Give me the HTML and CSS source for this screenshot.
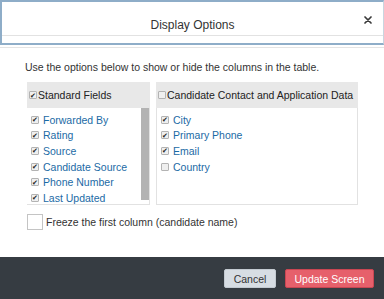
FILE: index.html
```html
<!DOCTYPE html>
<html lang="en">
<head>
  <meta charset="UTF-8">
  <meta name="viewport" content="width=device-width, initial-scale=1.0">
  <title>Display Options</title>
  <link rel="stylesheet" href="styles.css">
</head>
<body>
  <div class="modal">
    <div class="modal-top">
      <div class="modal-header">
        <h2>Display Options</h2>
        <svg class="close" width="8" height="8" viewBox="0 0 8 8">
          <path d="M1 1L7 7M7 1L1 7" stroke="#3a3a3a" stroke-width="1.7" stroke-linecap="round"/>
        </svg>
      </div>
    </div>

    <div class="modal-body">
      <p class="intro">Use the options below to show or hide the columns in the table.</p>

      <div class="field-groups">
        <div class="group group-standard">
          <div class="group-head"><span class="cb on"></span>Standard Fields</div>
          <div class="group-list">
            <ul>
              <li><span class="cb on"></span>Forwarded By</li>
              <li><span class="cb on"></span>Rating</li>
              <li><span class="cb on"></span>Source</li>
              <li><span class="cb on"></span>Candidate Source</li>
              <li><span class="cb on"></span>Phone Number</li>
              <li><span class="cb on"></span>Last Updated</li>
            </ul>
            <div class="scrollbar"></div>
          </div>
        </div>

        <div class="group group-contact">
          <div class="group-head"><span class="cb"></span>Candidate Contact and Application Data</div>
          <div class="group-list">
            <ul>
              <li><span class="cb on"></span>City</li>
              <li><span class="cb on"></span>Primary Phone</li>
              <li><span class="cb on"></span>Email</li>
              <li><span class="cb"></span>Country</li>
            </ul>
          </div>
        </div>
      </div>

      <label class="freeze"><span class="box"></span>Freeze the first column (candidate name)</label>
    </div>

    <div class="modal-footer">
      <button class="btn btn-cancel">Cancel</button>
      <button class="btn btn-update">Update Screen</button>
    </div>
  </div>
</body>
</html>
```

FILE: styles.css
```css
body {
  margin: 0;
  font-family: 'Liberation Sans', Arial, sans-serif;
  font-size: 10.5px;
  color: #333;
  background: #fff;
}
.modal {
  width: 384px;
  height: 299px;
  display: flex;
  flex-direction: column;
  overflow: hidden;
}
.modal-top {
  border: 2px solid #8eadc8;
  border-right: 1px solid #c9d6e0;
  height: 41px;
  background: #fff;
}
.modal-header {
  position: relative;
  height: 33px;
  border-bottom: 1px solid #e2e2e2;
  display: flex;
  align-items: center;
  justify-content: center;
}
.modal-header h2 {
  margin: 12px 0 0;
  font-size: 12px;
  font-weight: normal;
  color: #333;
}
.close {
  position: absolute;
  right: 11px;
  top: 14px;
}
.modal-body {
  flex: 1;
  border-top: 1px solid #e4e4e4;
  margin-top: 2px;
  padding: 0 26px 0 27px;
}
.intro {
  margin: 13px 0 0 -2px;
}
.field-groups {
  display: flex;
  gap: 6px;
  margin-top: 9px;
}
.group-head {
  height: 26px;
  background: #e8e8e8;
  display: flex;
  align-items: center;
  color: #222;
  white-space: nowrap;
}
.group-head .cb {
  margin: 0 1px 0 2px;
}
.group-standard {
  width: 123px;
}
.group-contact {
  flex: 1;
}
.group-list {
  display: flex;
  height: 96px;
  border: 1px solid #e2e2e2;
  border-top: none;
  overflow: hidden;
}
.group-standard .group-list {
  border-left: none;
}
ul {
  list-style: none;
  margin: 0;
  padding: 4px 0 0 4px;
  flex: 1;
}
li {
  height: 15.6px;
  display: flex;
  align-items: center;
  color: #1b6aa5;
  white-space: nowrap;
}
li .cb {
  margin-right: 4px;
}
.cb {
  box-sizing: border-box;
  width: 8px;
  height: 8px;
  border: 1px solid #b3b3b3;
  border-radius: 1px;
  background: #efefef;
  display: inline-flex;
  align-items: center;
  justify-content: center;
  flex: none;
}
.cb.on::after {
  content: "\2714";
  font-size: 7px;
  line-height: 1;
  color: #222;
}
.scrollbar {
  width: 8px;
  margin-bottom: 4px;
  background: #b3b3b3;
}
.freeze {
  display: flex;
  align-items: center;
  margin-top: 9px;
}
.freeze .box {
  width: 14px;
  height: 14px;
  border: 1px solid #c4c4c4;
  margin-right: 3px;
}
.modal-footer {
  height: 42px;
  background: #363c42;
  display: flex;
  justify-content: flex-end;
  align-items: center;
  gap: 9px;
  padding-right: 10px;
}
.btn {
  height: 19px;
  border-radius: 2px;
  font-family: inherit;
  font-size: 10.5px;
  padding: 0;
  white-space: nowrap;
  margin-top: 1px;
}
.btn-cancel {
  background: #d7dde3;
  border: 1px solid #c3cad1;
  color: #333;
  width: 52px;
}
.btn-update {
  background: #e6606b;
  border: 1px solid #c94652;
  color: #fff;
  width: 89px;
}
```
